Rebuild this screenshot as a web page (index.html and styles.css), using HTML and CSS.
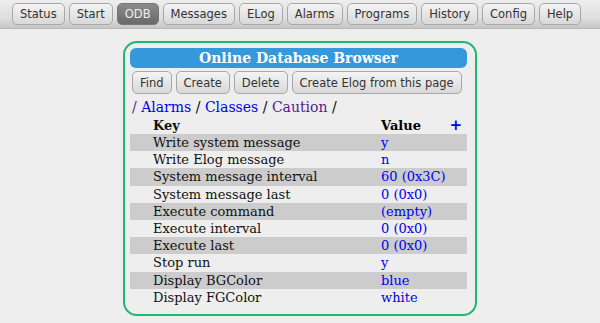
FILE: index.html
```html
<!DOCTYPE html>
<html lang="en">
<head>
    <meta charset="UTF-8">
    <title>ODB</title>
    <link rel="stylesheet" href="styles.css">
</head>
<body>
    <div class="mnav">
        <button class="navbtn">Status</button>
        <button class="navbtn">Start</button>
        <button class="navbtn active">ODB</button>
        <button class="navbtn">Messages</button>
        <button class="navbtn">ELog</button>
        <button class="navbtn">Alarms</button>
        <button class="navbtn">Programs</button>
        <button class="navbtn">History</button>
        <button class="navbtn">Config</button>
        <button class="navbtn">Help</button>
    </div>

    <div class="mtable">
        <div class="mtableheader">Online Database Browser</div>
        <div class="toolbar">
            <button class="mbtn">Find</button>
            <button class="mbtn">Create</button>
            <button class="mbtn">Delete</button>
            <button class="mbtn">Create Elog from this page</button>
        </div>
        <div class="odbpath">
            <a class="visited" href="#">/</a> <a href="#">Alarms</a> / <a href="#">Classes</a> / <a class="visited" href="#">Caution</a> /
        </div>
        <table class="odbtable">
            <tr class="head">
                <th class="key">Key</th>
                <th>Value</th>
                <th class="plus">+</th>
            </tr>
            <tr class="odd"><td class="key">Write system message</td><td class="value" colspan="2">y</td></tr>
            <tr><td class="key">Write Elog message</td><td class="value" colspan="2">n</td></tr>
            <tr class="odd"><td class="key">System message interval</td><td class="value" colspan="2">60 (0x3C)</td></tr>
            <tr><td class="key">System message last</td><td class="value" colspan="2">0 (0x0)</td></tr>
            <tr class="odd"><td class="key">Execute command</td><td class="value" colspan="2">(empty)</td></tr>
            <tr><td class="key">Execute interval</td><td class="value" colspan="2">0 (0x0)</td></tr>
            <tr class="odd"><td class="key">Execute last</td><td class="value" colspan="2">0 (0x0)</td></tr>
            <tr><td class="key">Stop run</td><td class="value" colspan="2">y</td></tr>
            <tr class="odd"><td class="key">Display BGColor</td><td class="value" colspan="2">blue</td></tr>
            <tr><td class="key">Display FGColor</td><td class="value" colspan="2">white</td></tr>
        </table>
    </div>
</body>
</html>
```

FILE: styles.css
```css
body {
    margin: 0;
    padding: 0;
    background-color: #eeeeee;
    font-family: "DejaVu Sans", sans-serif;
}

.mnav {
    height: 29px;
    padding-left: 12px;
    padding-top: 3px;
    display: flex;
    gap: 4px;
    align-items: flex-start;
    box-sizing: border-box;
    background: linear-gradient(to bottom, #eeeeee 0%, #dedede 65%, #c6c6c6 100%);
    border-bottom: 1px solid #b8b8b8;
}

.navbtn, .mbtn {
    font-family: "DejaVu Sans", sans-serif;
    font-size: 11.5px;
    color: #333;
    height: 22px;
    padding: 0 7px;
    border: 1px solid #a8a8a8;
    border-radius: 5px;
    background: linear-gradient(to bottom, #f4f4f4, #d8d8d8);
    cursor: pointer;
}

.navbtn.active {
    background: linear-gradient(to bottom, #8a8a8a, #6a6a6a);
    color: #eeeeee;
    border-color: #777;
}

.mtable {
    box-sizing: border-box;
    width: 354px;
    margin: 12px auto 0;
    border: 2px solid #22b574;
    border-radius: 14px;
    padding: 5px 8px 8px 5px;
    background-color: #eeeeee;
}

.mtableheader {
    background-color: #3498db;
    color: #ffffff;
    font-family: "DejaVu Serif", serif;
    font-weight: bold;
    font-size: 14px;
    text-align: center;
    height: 20px;
    line-height: 20px;
    border-radius: 6px;
}

.toolbar {
    display: flex;
    gap: 4px;
    padding: 3px 2px 0;
}

.mbtn {
    height: 23px;
}

.odbpath {
    font-family: "DejaVu Serif", serif;
    font-size: 14px;
    line-height: 18px;
    padding: 4px 2px 0;
    color: #000;
}

.odbpath a {
    color: #0000ee;
    text-decoration: none;
}

.odbpath a.visited {
    color: #551a8b;
}

.odbtable {
    width: 100%;
    border-collapse: collapse;
    font-family: "DejaVu Serif", serif;
    font-size: 13px;
}

.odbtable td, .odbtable th {
    padding: 0;
    height: 17.2px;
    text-align: left;
}

.odbtable .key {
    padding-left: 23px;
    width: 228px;
    color: #111;
}

.odbtable .value {
    color: #0000ee;
}

.odbtable th {
    font-weight: bold;
    color: #000;
}

.odbtable th.plus {
    color: #0000ee;
    text-align: right;
    padding-right: 5px;
    font-size: 15px;
}

.odbtable tr.odd {
    background-color: #cccccc;
}
```
